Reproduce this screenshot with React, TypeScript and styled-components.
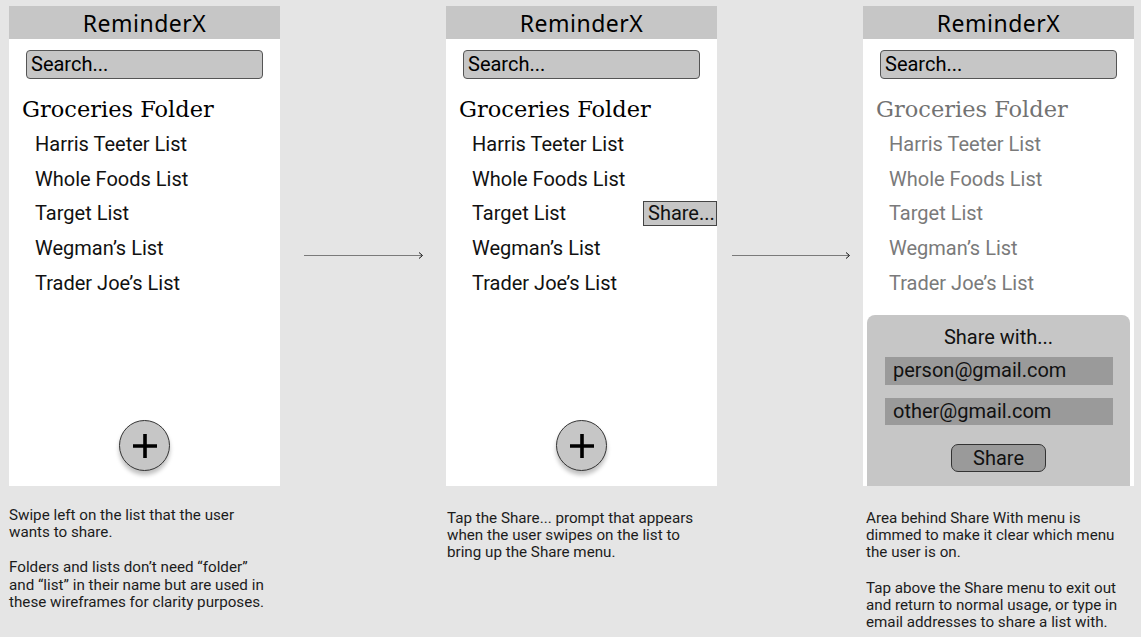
import * as React from "react";
import styled, { createGlobalStyle } from "styled-components";

const GlobalStyle = createGlobalStyle`
  body {
    margin: 0;
    background: #e5e5e5;
    font-family: Roboto, "Noto Sans", sans-serif;
    color: #111;
  }
`;

const lists = [
  "Harris Teeter List",
  "Whole Foods List",
  "Target List",
  "Wegman’s List",
  "Trader Joe’s List"
];

const Arrow = ({ offset, length }) => (
  <ArrowCell offset={offset}>
    <svg width={length} height="9" viewBox={`0 0 ${length} 9`}>
      <line x1="0" y1="4.5" x2={length - 1} y2="4.5" stroke="#7a7a7a" strokeWidth="1.2" />
      <path
        d={`M${length - 4} 1.5 L${length - 0.5} 4.5 L${length - 4} 7.5`}
        fill="none"
        stroke="#111"
        strokeWidth="1"
      />
    </svg>
  </ArrowCell>
);

const PlusButton = () => (
  <Fab>
    <svg width="26" height="26" viewBox="0 0 26 26">
      <path d="M13 1 V25 M1 13 H25" stroke="#000" strokeWidth="3.6" />
    </svg>
  </Fab>
);

const Phone = ({ dimmed = false, shareRow = -1, children = null }) => (
  <PhoneFrame>
    <Header>ReminderX</Header>
    <SearchBox>Search...</SearchBox>
    <FolderTitle dimmed={dimmed}>Groceries Folder</FolderTitle>
    <List>
      {lists.map((name, i) => (
        <ListRow key={name} dimmed={dimmed}>
          <span>{name}</span>
          {i === shareRow && <SharePrompt>Share...</SharePrompt>}
        </ListRow>
      ))}
    </List>
    {children}
  </PhoneFrame>
);

const App = () => (
  <>
    <GlobalStyle />
    <Board>
      <Column>
        <Phone>
          <PlusButton />
        </Phone>
        <Note offset={20.5} indent={0}>
          <p>
            Swipe left on the list that the user
            <br />
            wants to share.
          </p>
          <p>
            Folders and lists don’t need “folder”
            <br />
            and “list” in their name but are used in
            <br />
            these wireframes for clarity purposes.
          </p>
        </Note>
      </Column>

      <Arrow offset={24} length={119} />

      <Column>
        <Phone shareRow={2}>
          <PlusButton />
        </Phone>
        <Note offset={23.5} indent={1}>
          <p>
            Tap the Share... prompt that appears
            <br />
            when the user swipes on the list to
            <br />
            bring up the Share menu.
          </p>
        </Note>
      </Column>

      <Arrow offset={15} length={118} />

      <Column>
        <Phone dimmed>
          <SharePanel>
            <PanelTitle>Share with...</PanelTitle>
            <EmailField first>person@gmail.com</EmailField>
            <EmailField>other@gmail.com</EmailField>
            <ShareButton>Share</ShareButton>
          </SharePanel>
        </Phone>
        <Note offset={23.5} indent={3}>
          <p>
            Area behind Share With menu is
            <br />
            dimmed to make it clear which menu
            <br />
            the user is on.
          </p>
          <p>
            Tap above the Share menu to exit out
            <br />
            and return to normal usage, or type in
            <br />
            email addresses to share a list with.
          </p>
        </Note>
      </Column>
    </Board>
  </>
);

const Board = styled.div`
  display: grid;
  grid-template-columns: 271px 166px 271px 146px 271px;
  align-items: start;
  padding: 6px 0 0 9px;
`;

const Column = styled.div`
  display: flex;
  flex-direction: column;
`;

const PhoneFrame = styled.div`
  display: flex;
  flex-direction: column;
  width: 271px;
  height: 480px;
  background: #fff;
`;

const Header = styled.div`
  height: 33px;
  background: #c6c6c6;
  display: flex;
  align-items: center;
  justify-content: center;
  font-family: "Noto Sans", sans-serif;
  font-size: 23px;
  letter-spacing: 0.5px;
  color: #000;
`;

const SearchBox = styled.div`
  box-sizing: border-box;
  margin: 11px 17px 0;
  height: 29px;
  padding-left: 4px;
  border: 1px solid #555;
  border-radius: 4px;
  background: #c6c6c6;
  font-size: 20px;
  line-height: 27px;
  color: #000;
`;

const FolderTitle = styled.div`
  margin: 15px 0 0 13px;
  font-family: "DejaVu Serif", serif;
  font-size: 22.5px;
  line-height: 30px;
  color: ${props => (props.dimmed ? "#727272" : "#000")};
`;

const List = styled.div`
  margin-top: 3px;
`;

const ListRow = styled.div`
  display: flex;
  align-items: center;
  justify-content: space-between;
  padding-left: 26px;
  font-size: 20px;
  line-height: 34.7px;
  color: ${props => (props.dimmed ? "#7a7a7a" : "#111")};
`;

const SharePrompt = styled.div`
  box-sizing: border-box;
  width: 74px;
  height: 25px;
  padding-left: 4px;
  border: 1px solid #444;
  background: #c6c6c6;
  font-size: 20px;
  line-height: 23px;
  color: #111;
`;

const Fab = styled.div`
  box-sizing: border-box;
  display: flex;
  align-items: center;
  justify-content: center;
  width: 51px;
  height: 51px;
  margin: auto auto 15px;
  border: 1px solid #333;
  border-radius: 50%;
  background: #c6c6c6;
  box-shadow: 0 4px 4px rgba(0, 0, 0, 0.25);
`;

const SharePanel = styled.div`
  display: flex;
  flex-direction: column;
  align-items: center;
  margin: auto 4px 0;
  padding: 10px 0 14.3px;
  border-radius: 8px 8px 0 0;
  background: #c6c6c6;
`;

const PanelTitle = styled.div`
  font-size: 20px;
  line-height: 24px;
  color: #111;
`;

const EmailField = styled.div`
  box-sizing: border-box;
  align-self: stretch;
  margin: ${props => (props.first ? "8.5px" : "0")} 17px 13px 18px;
  height: 27.5px;
  padding-left: 8px;
  background: #9a9a9a;
  font-size: 20px;
  line-height: 27.5px;
  color: #111;
`;

const ShareButton = styled.div`
  box-sizing: border-box;
  width: 95px;
  height: 28px;
  margin-top: 5.7px;
  border: 1px solid #333;
  border-radius: 7px;
  background: #9a9a9a;
  text-align: center;
  font-size: 20px;
  line-height: 26px;
  color: #111;
`;

const Note = styled.div`
  margin: ${props => props.offset}px 0 0 ${props => props.indent}px;
  font-size: 15.2px;
  line-height: 17.3px;
  color: #1c1c1c;

  p {
    margin: 0;
  }

  p + p {
    margin-top: 18.2px;
  }
`;

const ArrowCell = styled.div`
  margin: 244.5px 0 0 ${props => props.offset}px;
  line-height: 0;
`;

export default App;
